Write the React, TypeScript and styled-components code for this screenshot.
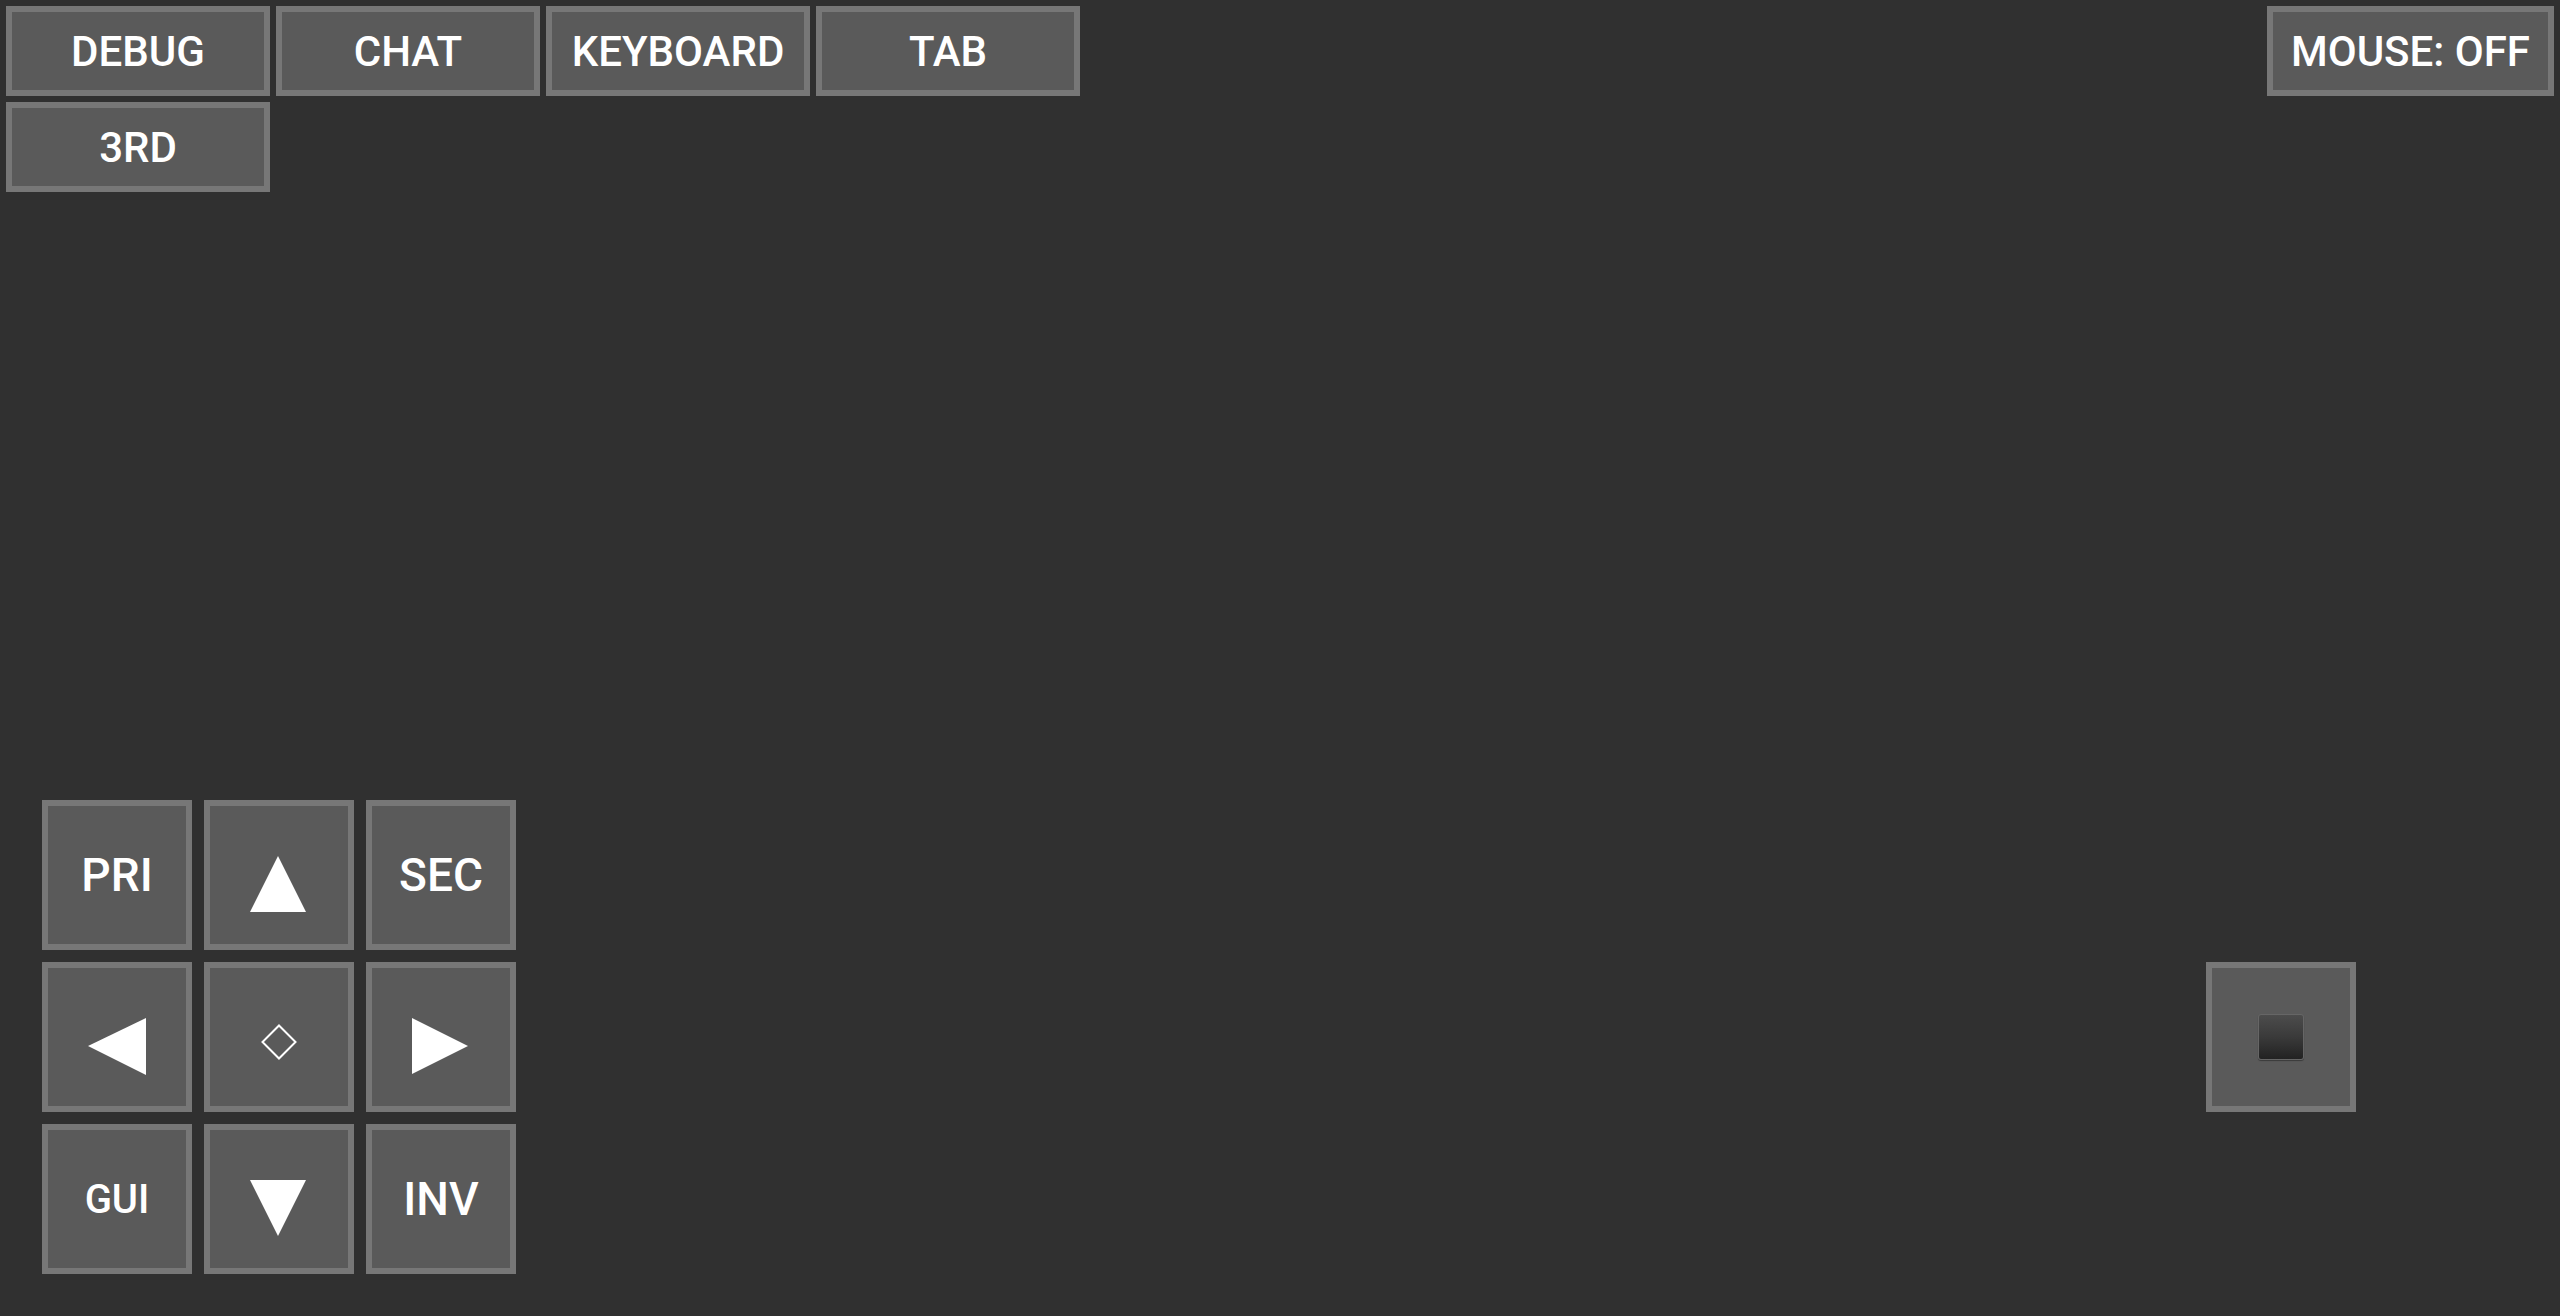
import * as React from "react";
import styled, { createGlobalStyle } from "styled-components";

const GlobalStyle = createGlobalStyle`
  html, body {
    margin: 0;
    padding: 0;
    background-color: #303030;
  }
  body {
    font-family: Roboto, "Liberation Sans", sans-serif;
    color: #ffffff;
  }
`;

const TOP_BUTTONS = ["DEBUG", "CHAT", "KEYBOARD", "TAB", "3RD"];

type Arrow = "up" | "down" | "left" | "right";

const ARROW_POINTS: Record<Arrow, string> = {
  up: "28,0 56,56 0,56",
  down: "0,0 56,0 28,56",
  left: "0,28 58,0 58,57",
  right: "0,0 56,28 0,56",
};

const ArrowIcon: React.FunctionComponent<{ dir: Arrow }> = ({ dir }) => (
  <ArrowSvg viewBox="0 0 58 57" width={58} height={57}>
    <polygon points={ARROW_POINTS[dir]} fill="#ffffff" />
  </ArrowSvg>
);

const DiamondIcon = () => (
  <DiamondSvg viewBox="0 0 36 36" width={36} height={36}>
    <polygon
      points="18,1.5 34.5,18 18,34.5 1.5,18"
      fill="none"
      stroke="#ffffff"
      strokeWidth={2}
    />
  </DiamondSvg>
);

const App: React.FunctionComponent = () => {
  return (
    <Screen>
      <GlobalStyle />
      <TopBar>
        <MenuGrid>
          {TOP_BUTTONS.map((label) => (
            <MenuButton key={label}>{label}</MenuButton>
          ))}
        </MenuGrid>
        <MouseButton>MOUSE: OFF</MouseButton>
      </TopBar>

      <BottomBar>
        <Pad>
          <PadKey size={46}>PRI</PadKey>
          <PadKey>
            <ArrowIcon dir="up" />
          </PadKey>
          <PadKey size={46}>SEC</PadKey>
          <PadKey>
            <ArrowIcon dir="left" />
          </PadKey>
          <PadKey>
            <DiamondIcon />
          </PadKey>
          <PadKey>
            <ArrowIcon dir="right" />
          </PadKey>
          <PadKey size={40}>GUI</PadKey>
          <PadKey>
            <ArrowIcon dir="down" />
          </PadKey>
          <PadKey size={46}>INV</PadKey>
        </Pad>
        <PadKey>
          <StopSquare />
        </PadKey>
      </BottomBar>
    </Screen>
  );
};

const Screen = styled.div`
  width: 100vw;
  height: 100vh;
  display: flex;
  flex-direction: column;
  justify-content: space-between;
  background-color: #303030;
  overflow: hidden;
`;

const TopBar = styled.div`
  display: flex;
  justify-content: space-between;
  align-items: flex-start;
  padding: 6px;
`;

const MenuGrid = styled.div`
  display: grid;
  grid-template-columns: repeat(4, 264px);
  grid-auto-rows: 90px;
  gap: 6px;
`;

const BaseButton = styled.div`
  box-sizing: border-box;
  display: flex;
  align-items: center;
  justify-content: center;
  background-color: #5a5a5a;
  border: 6px solid #777777;
  color: #ffffff;
  font-family: Roboto, "Liberation Sans", sans-serif;
  font-weight: 500;
  white-space: nowrap;
  user-select: none;
`;

const MenuButton = styled(BaseButton)`
  height: 90px;
  font-size: 42px;
`;

const MouseButton = styled(BaseButton)`
  height: 90px;
  min-width: 264px;
  padding: 0 18px;
  font-size: 42px;
`;

const BottomBar = styled.div`
  display: flex;
  justify-content: space-between;
  align-items: center;
  padding: 0 204px 42px 42px;
`;

const Pad = styled.div`
  display: grid;
  grid-template-columns: repeat(3, 150px);
  grid-auto-rows: 150px;
  gap: 12px;
`;

const PadKey = styled(BaseButton)<{ size?: number }>`
  width: 150px;
  height: 150px;
  font-size: ${({ size }) => `${size ?? 46}px`};
`;

const ArrowSvg = styled.svg`
  display: block;
  margin-top: 18px;
`;

const DiamondSvg = styled.svg`
  display: block;
  margin-top: 9px;
`;

const StopSquare = styled.div`
  box-sizing: border-box;
  width: 46px;
  height: 46px;
  border-radius: 3px;
  border: 1px solid #666666;
  background: linear-gradient(to bottom, #4c4c4c 0%, #3a3a3a 50%, #222222 100%);
  box-shadow: 0 1px 1px rgba(0, 0, 0, 0.35);
`;

export default App;
